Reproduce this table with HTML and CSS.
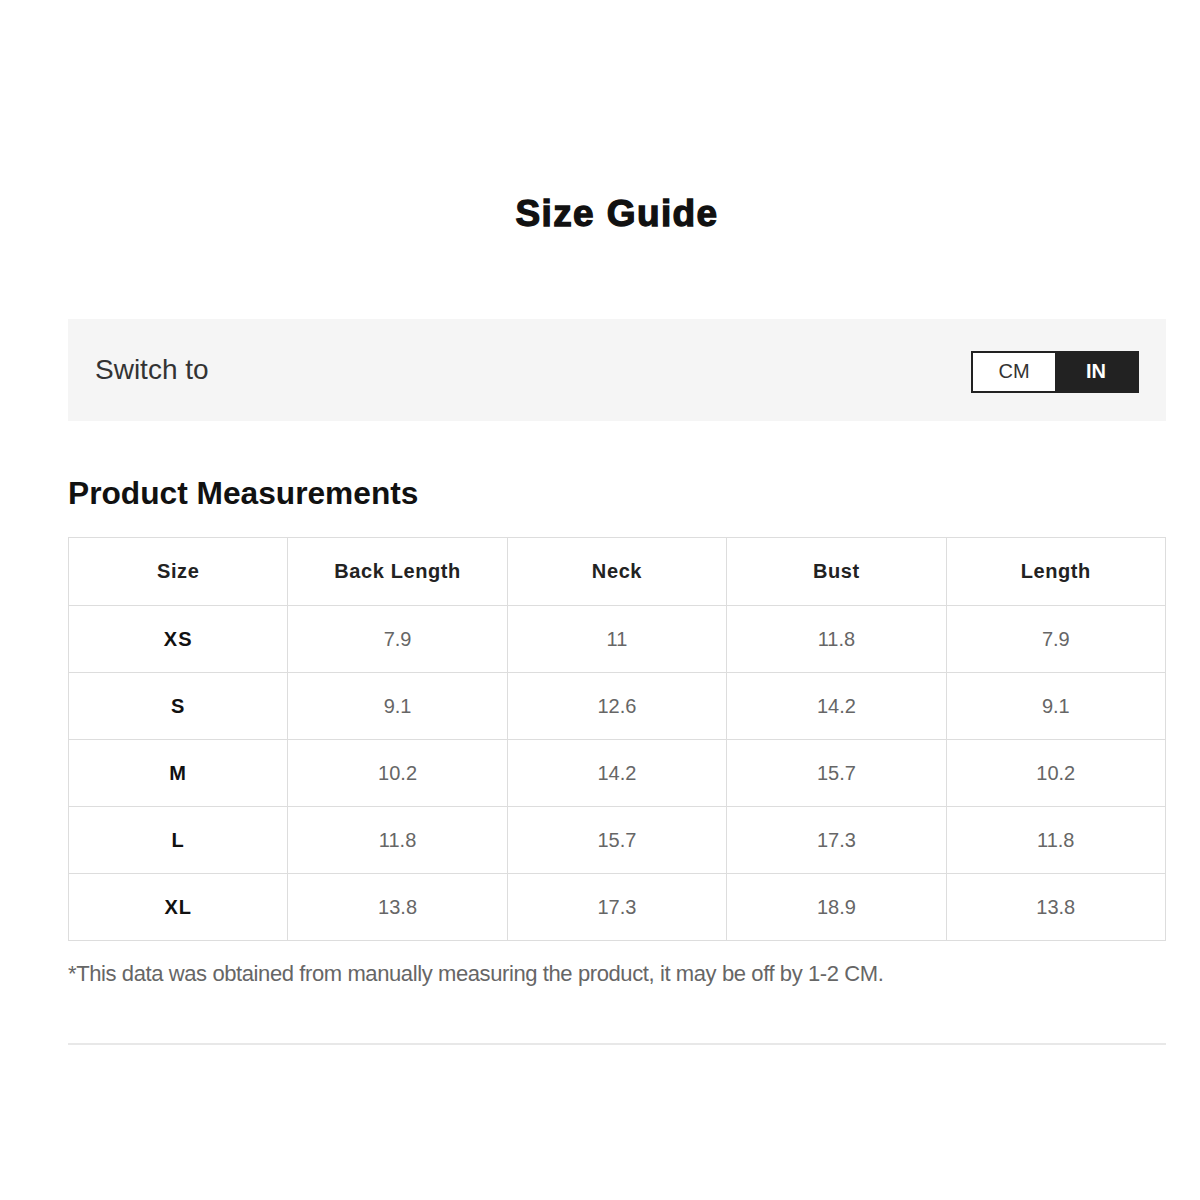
FILE: index.html
```html
<!DOCTYPE html>
<html>
<head>
<meta charset="utf-8">
<link rel="stylesheet" href="styles.css">
</head>
<body>
<div class="page">
  <h1 class="title">Size Guide</h1>
  <div class="switch-bar">
    <span class="switch-label">Switch to</span>
    <div class="toggle">
      <span class="opt">CM</span>
      <span class="opt active">IN</span>
    </div>
  </div>
  <h2 class="section-title">Product Measurements</h2>
  <table class="sizes">
    <thead>
      <tr><th>Size</th><th>Back Length</th><th>Neck</th><th>Bust</th><th>Length</th></tr>
    </thead>
    <tbody>
      <tr><td class="sz">XS</td><td>7.9</td><td>11</td><td>11.8</td><td>7.9</td></tr>
      <tr><td class="sz">S</td><td>9.1</td><td>12.6</td><td>14.2</td><td>9.1</td></tr>
      <tr><td class="sz">M</td><td>10.2</td><td>14.2</td><td>15.7</td><td>10.2</td></tr>
      <tr><td class="sz">L</td><td>11.8</td><td>15.7</td><td>17.3</td><td>11.8</td></tr>
      <tr><td class="sz">XL</td><td>13.8</td><td>17.3</td><td>18.9</td><td>13.8</td></tr>
    </tbody>
  </table>
  <p class="note">*This data was obtained from manually measuring the product, it may be off by 1-2 CM.</p>
  <hr class="divider">
</div>
</body>
</html>
```
FILE: styles.css
```css
html, body {
  margin: 0;
  padding: 0;
  background: #fff;
}
body {
  font-family: "Liberation Sans", Arial, sans-serif;
  color: #222;
}
.page {
  width: 1098px;
  margin-left: 68px;
  padding-top: 190px;
}
.title {
  margin: 0;
  text-align: center;
  font-size: 37px;
  font-weight: 900;
  line-height: 48px;
  letter-spacing: 1.4px;
  color: #111;
  -webkit-text-stroke: 1.3px #111;
}
.switch-bar {
  margin-top: 81px;
  height: 102px;
  background: #f5f5f5;
  display: flex;
  align-items: center;
  justify-content: space-between;
  padding: 0 27px;
  box-sizing: border-box;
}
.switch-label {
  font-size: 28px;
  color: #333;
}
.toggle {
  display: flex;
  border: 2px solid #222;
  width: 168px;
  height: 42px;
  box-sizing: border-box;
  margin-top: 3px;
}
.opt {
  flex: 1;
  display: flex;
  align-items: center;
  justify-content: center;
  font-size: 20px;
  background: #fff;
  color: #333;
}
.opt.active {
  background: #222;
  color: #fff;
  font-weight: bold;
}
.section-title {
  margin: 54px 0 0 0;
  font-size: 31.7px;
  line-height: 36px;
  font-weight: bold;
  color: #111;
}
.sizes {
  margin-top: 26px;
  width: 100%;
  border-collapse: collapse;
  table-layout: fixed;
}
.sizes th, .sizes td {
  border: 1px solid #ddd;
  text-align: center;
  height: 66px;
  padding: 0;
  font-size: 20px;
}
.sizes th {
  height: 67px;
  font-weight: bold;
  color: #222;
  letter-spacing: 0.6px;
}
.sizes td {
  color: #666;
}
.sizes td.sz {
  font-weight: bold;
  color: #111;
  letter-spacing: 1px;
}
.note {
  margin: 20px 0 0 0;
  font-size: 22px;
  color: #666;
  letter-spacing: -0.4px;
}
.divider {
  margin: 56px 0 0 0;
  border: 0;
  border-top: 2px solid #e8e8e8;
}
```
